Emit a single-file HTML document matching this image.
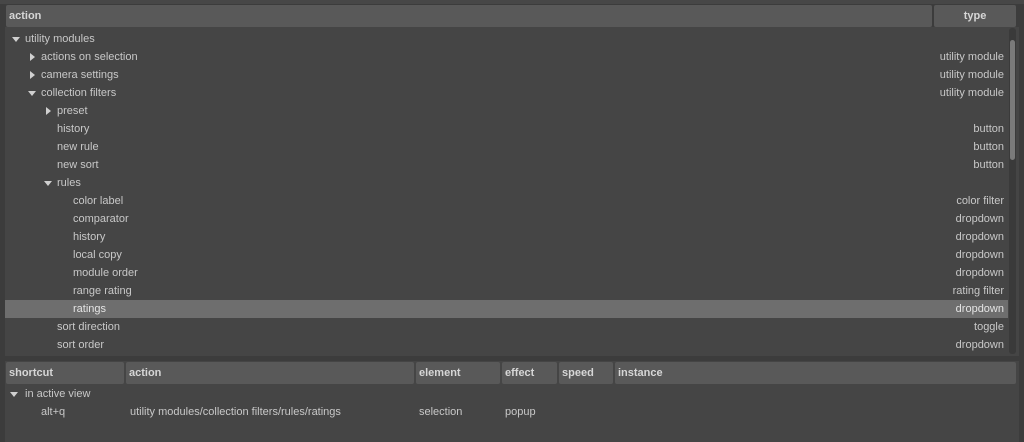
<!DOCTYPE html><html><head><style>
*{margin:0;padding:0;box-sizing:border-box}
body{width:1024px;height:442px;background:#3c3c3c;font-family:"Liberation Sans",sans-serif;font-size:11px;color:#c8c8c8;position:relative;overflow:hidden}
.a{position:absolute}
.h{position:absolute;background:#595959;border-radius:2px;color:#d6d6d6;font-weight:bold;padding-left:3px;line-height:22px;height:22px}
.r{position:absolute;left:5px;width:1003px;height:18px;line-height:18px}
.r .t{position:absolute;right:4px;top:0}
.tri{position:absolute;top:0}
</style></head><body>
<div class="a" style="left:0;top:0;width:1024px;height:4px;background:#474747"></div>
<div class="a" style="left:5px;top:27px;width:1014px;height:329px;background:#454545"></div>
<div class="h" style="left:6px;top:5px;width:926px">action</div>
<div class="h" style="left:934px;top:5px;width:82px;text-align:center;padding:0">type</div>
<div class="a" style="left:1009px;top:28px;width:7px;height:326px;background:#3a3a3a;border-radius:3px"></div>
<div class="a" style="left:1010px;top:40px;width:5px;height:120px;background:#7a7a7a;border-radius:3px"></div>
<div class="r" style="top:300px;background:#6e6e6e"></div>
<div id="rows"></div>
<script>
var d=[[0,'d','utility modules',''],[1,'r','actions on selection','utility module'],[1,'r','camera settings','utility module'],[1,'d','collection filters','utility module'],[2,'r','preset',''],[2,'','history','button'],[2,'','new rule','button'],[2,'','new sort','button'],[2,'d','rules',''],[3,'','color label','color filter'],[3,'','comparator','dropdown'],[3,'','history','dropdown'],[3,'','local copy','dropdown'],[3,'','module order','dropdown'],[3,'','range rating','rating filter'],[3,'','ratings','dropdown'],[2,'','sort direction','toggle'],[2,'','sort order','dropdown']];
var h='';d.forEach(function(e,i){var y=30+i*18,x=20+e[0]*16;var tri='';
if(e[1]=='d')tri='<svg class="tri" style="left:'+(x-14)+'px" width="10" height="18"><path d="M1 7h8l-4 5z" fill="#d0d0d0"/></svg>';
if(e[1]=='r')tri='<svg class="tri" style="left:'+(x-14)+'px" width="10" height="18"><path d="M3 5v8l5-4z" fill="#d0d0d0"/></svg>';
h+='<div class="r" style="top:'+y+'px'+(i==15?';color:#e4e4e4':'')+'">'+tri+'<span class="a" style="left:'+x+'px">'+e[2]+'</span><span class="t">'+e[3]+'</span></div>';});
document.getElementById('rows').innerHTML=h;
</script>
<div class="a" style="left:5px;top:361px;width:1014px;height:81px;background:#454545"></div>
<div class="h" style="left:6px;top:362px;width:118px">shortcut</div>
<div class="h" style="left:126px;top:362px;width:288px">action</div>
<div class="h" style="left:416px;top:362px;width:84px">element</div>
<div class="h" style="left:502px;top:362px;width:55px">effect</div>
<div class="h" style="left:559px;top:362px;width:54px">speed</div>
<div class="h" style="left:615px;top:362px;width:401px">instance</div>
<svg class="a" style="left:9px;top:385px" width="10" height="18"><path d="M1 7h8l-4 5z" fill="#d0d0d0"/></svg>
<div class="a" style="left:25px;top:385px;line-height:18px">in active view</div>
<div class="a" style="left:41px;top:403px;line-height:18px">alt+q</div>
<div class="a" style="left:130px;top:403px;line-height:18px">utility modules/collection filters/rules/ratings</div>
<div class="a" style="left:419px;top:403px;line-height:18px">selection</div>
<div class="a" style="left:505px;top:403px;line-height:18px">popup</div>
</body></html>
